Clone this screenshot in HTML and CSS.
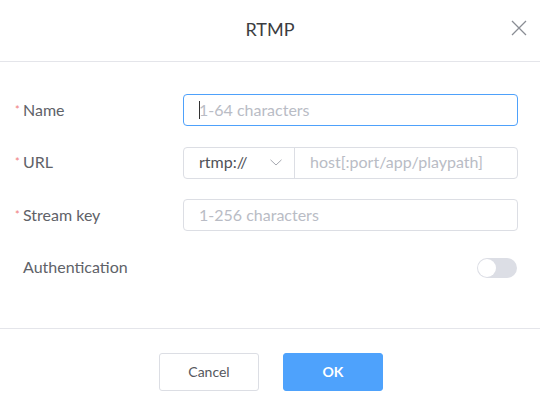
FILE: index.html
```html
<!DOCTYPE html>
<html>
<head>
<meta charset="utf-8">
<link rel="stylesheet" href="styles.css">
</head>
<body>
<div class="dialog">
  <div class="header">
    <div class="title">RTMP</div>
    <button class="close" aria-label="Close">
      <svg width="16" height="16" viewBox="0 0 16 16"><path d="M1 1 L15 15 M15 1 L1 15" stroke="#8a8d94" stroke-width="1.3" fill="none"/></svg>
    </button>
  </div>
  <div class="body">
    <div class="row">
      <label class="label"><span class="req">*</span>Name</label>
      <div class="field focused">
        <span class="caret"></span>
        <input class="input" placeholder="1-64 characters">
      </div>
    </div>
    <div class="row">
      <label class="label"><span class="req">*</span>URL</label>
      <div class="field group">
        <div class="select">
          <span class="select-value">rtmp://</span>
          <svg class="chev" width="12" height="7" viewBox="0 0 12 7"><path d="M0.5 0.8 L6 6 L11.5 0.8" stroke="#a5a8b0" stroke-width="1" fill="none"/></svg>
        </div>
        <input class="input host" placeholder="host[:port/app/playpath]">
      </div>
    </div>
    <div class="row">
      <label class="label"><span class="req">*</span>Stream key</label>
      <div class="field">
        <input class="input" placeholder="1-256 characters">
      </div>
    </div>
    <div class="row auth">
      <label class="label">Authentication</label>
      <div class="switch"><span class="knob"></span></div>
    </div>
  </div>
  <div class="footer">
    <button class="btn cancel">Cancel</button>
    <button class="btn ok">OK</button>
  </div>
</div>
</body>
</html>
```

FILE: styles.css
```css
* { box-sizing: border-box; }
html, body { margin: 0; padding: 0; background: #fff; }
body { font-family: Lato, "Noto Sans", sans-serif; color: #4d4f55; }
.dialog { width: 540px; height: 408px; background: #fff; display: flex; flex-direction: column; }
.header { height: 62px; border-bottom: 1px solid #e4e5ea; display: flex; align-items: center; justify-content: center; position: relative; }
.title { font-size: 18px; color: #3c3d41; margin-top: -4px; }
.close { position: absolute; right: 13px; top: 20px; width: 16px; height: 16px; padding: 0; border: 0; background: none; display: flex; }
.body { padding: 32px 22px 44px 13px; display: flex; flex-direction: column; gap: 20.6px; border-bottom: 1px solid #e4e5ea; }
.row { display: flex; align-items: center; height: 32px; }
.label { width: 170px; flex-shrink: 0; font-size: 16px; color: #606268; display: flex; align-items: center; padding-left: 10px; padding-bottom: 2px; }
.req { color: #f07a7a; font-size: 11px; width: 0; margin-left: -8px; margin-right: 8px; position: relative; top: 0; }
.field { flex: 1; min-width: 0; height: 32px; border: 1px solid #dcdee4; border-radius: 4px; display: flex; position: relative; }
.field.focused { border-color: #4ea1fb; }
.input { flex: 1; width: 0; min-width: 0; border: 0; outline: none; background: transparent; font-family: Lato, "Noto Sans", sans-serif; font-size: 16px; padding: 0 15px 2px; color: #333; }
.input::placeholder { color: #b9bcc5; }
.caret { position: absolute; left: 15px; top: 6px; width: 1px; height: 18px; background: #333; }
.select { width: 111px; flex-shrink: 0; border-right: 1px solid #dcdee4; display: flex; align-items: center; padding-left: 15px; }
.select-value { font-size: 16px; color: #505258; flex: 1; padding-bottom: 2px; }
.chev { margin-right: 12px; }
.host { padding-left: 15px; }
.auth { justify-content: space-between; }
.auth .label { width: auto; }
.switch { width: 40px; height: 20px; border-radius: 10px; background: #dcdee5; position: relative; margin-right: 1px; }
.knob { position: absolute; left: 1px; top: 1px; width: 18px; height: 18px; border-radius: 50%; background: #fff; }
.footer { flex: 1; display: flex; justify-content: center; align-items: flex-start; padding: 24px 0 0 2px; gap: 24px; }
.btn { width: 100px; height: 38px; border-radius: 3px; font-family: Lato, "Noto Sans", sans-serif; font-size: 14px; cursor: pointer; padding-bottom: 2px; }
.cancel { background: #fff; border: 1px solid #dcdee4; color: #55575d; }
.ok { background: #4ea2fc; border: 1px solid #4ea2fc; color: #fff; font-weight: 700; }
```
